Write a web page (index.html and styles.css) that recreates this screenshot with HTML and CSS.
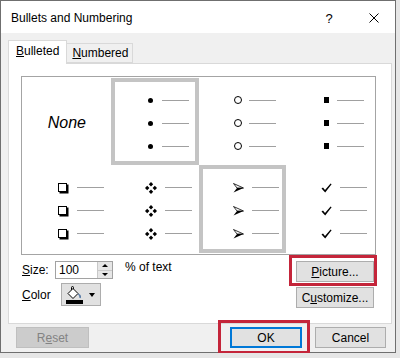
FILE: index.html
```html
<!DOCTYPE html>
<html lang="en">
<head>
    <meta charset="UTF-8">
    <meta name="viewport" content="width=device-width, initial-scale=1.0">
    <title>Bullets and Numbering</title>
    <link rel="stylesheet" href="styles.css">
</head>
<body>
    <div class="window">
        <header class="titlebar">
            <span class="title">Bullets and Numbering</span>
            <span class="help">?</span>
            <svg class="close" width="10" height="10" viewBox="0 0 10 10">
                <path d="M0.5 0.5 L9.5 9.5 M9.5 0.5 L0.5 9.5" stroke="#000" stroke-width="1" fill="none"/>
            </svg>
        </header>

        <main class="content">
            <div class="tabs">
                <div class="tab active"><u>B</u>ulleted</div>
                <div class="tab"><u>N</u>umbered</div>
            </div>

            <section class="panel">
                <div class="gallery">
                    <!-- Row 1 -->
                    <div class="cell none"><span>None</span></div>
                    <div class="cell selected">
                        <div class="item"><span class="glyph"><i class="dot"></i></span><span class="line"></span></div>
                        <div class="item"><span class="glyph"><i class="dot"></i></span><span class="line"></span></div>
                        <div class="item"><span class="glyph"><i class="dot"></i></span><span class="line"></span></div>
                    </div>
                    <div class="cell">
                        <div class="item"><span class="glyph"><i class="ring"></i></span><span class="line"></span></div>
                        <div class="item"><span class="glyph"><i class="ring"></i></span><span class="line"></span></div>
                        <div class="item"><span class="glyph"><i class="ring"></i></span><span class="line"></span></div>
                    </div>
                    <div class="cell">
                        <div class="item"><span class="glyph"><i class="square"></i></span><span class="line"></span></div>
                        <div class="item"><span class="glyph"><i class="square"></i></span><span class="line"></span></div>
                        <div class="item"><span class="glyph"><i class="square"></i></span><span class="line"></span></div>
                    </div>

                    <!-- Row 2 -->
                    <div class="cell wide">
                        <div class="item"><span class="glyph"><i class="box"></i></span><span class="line"></span></div>
                        <div class="item"><span class="glyph"><i class="box"></i></span><span class="line"></span></div>
                        <div class="item"><span class="glyph"><i class="box"></i></span><span class="line"></span></div>
                    </div>
                    <div class="cell wide">
                        <div class="item"><span class="glyph"><svg width="12" height="12" viewBox="0 0 12 12"><path d="M6 0 L8.2 2.2 L6 4.4 L3.8 2.2Z M2.2 3.8 L4.4 6 L2.2 8.2 L0 6Z M9.8 3.8 L12 6 L9.8 8.2 L7.6 6Z M6 7.6 L8.2 9.8 L6 12 L3.8 9.8Z" fill="#000"/></svg></span><span class="line"></span></div>
                        <div class="item"><span class="glyph"><svg width="12" height="12" viewBox="0 0 12 12"><path d="M6 0 L8.2 2.2 L6 4.4 L3.8 2.2Z M2.2 3.8 L4.4 6 L2.2 8.2 L0 6Z M9.8 3.8 L12 6 L9.8 8.2 L7.6 6Z M6 7.6 L8.2 9.8 L6 12 L3.8 9.8Z" fill="#000"/></svg></span><span class="line"></span></div>
                        <div class="item"><span class="glyph"><svg width="12" height="12" viewBox="0 0 12 12"><path d="M6 0 L8.2 2.2 L6 4.4 L3.8 2.2Z M2.2 3.8 L4.4 6 L2.2 8.2 L0 6Z M9.8 3.8 L12 6 L9.8 8.2 L7.6 6Z M6 7.6 L8.2 9.8 L6 12 L3.8 9.8Z" fill="#000"/></svg></span><span class="line"></span></div>
                    </div>
                    <div class="cell wide selected">
                        <div class="item"><span class="glyph"><svg width="11" height="10" viewBox="0 0 11 10"><path d="M0.5 0.5 L10.5 5 L4 5 Z" fill="#fff" stroke="#000" stroke-width="0.8"/><path d="M4 5 L10.5 5 L0.5 9.5 Z" fill="#000"/></svg></span><span class="line"></span></div>
                        <div class="item"><span class="glyph"><svg width="11" height="10" viewBox="0 0 11 10"><path d="M0.5 0.5 L10.5 5 L4 5 Z" fill="#fff" stroke="#000" stroke-width="0.8"/><path d="M4 5 L10.5 5 L0.5 9.5 Z" fill="#000"/></svg></span><span class="line"></span></div>
                        <div class="item"><span class="glyph"><svg width="11" height="10" viewBox="0 0 11 10"><path d="M0.5 0.5 L10.5 5 L4 5 Z" fill="#fff" stroke="#000" stroke-width="0.8"/><path d="M4 5 L10.5 5 L0.5 9.5 Z" fill="#000"/></svg></span><span class="line"></span></div>
                    </div>
                    <div class="cell wide">
                        <div class="item"><span class="glyph"><svg width="11" height="10" viewBox="0 0 11 10"><path d="M0.5 5.6 L2 4.6 L4 7 L9.6 0.4 L10.6 1.2 L4.2 9.6 Z" fill="#000"/></svg></span><span class="line"></span></div>
                        <div class="item"><span class="glyph"><svg width="11" height="10" viewBox="0 0 11 10"><path d="M0.5 5.6 L2 4.6 L4 7 L9.6 0.4 L10.6 1.2 L4.2 9.6 Z" fill="#000"/></svg></span><span class="line"></span></div>
                        <div class="item"><span class="glyph"><svg width="11" height="10" viewBox="0 0 11 10"><path d="M0.5 5.6 L2 4.6 L4 7 L9.6 0.4 L10.6 1.2 L4.2 9.6 Z" fill="#000"/></svg></span><span class="line"></span></div>
                    </div>
                </div>

                <div class="controls">
                    <div class="settings">
                        <div class="size-row">
                            <label class="label size-label"><u>S</u>ize:</label>
                            <div class="spin">
                                <span class="spin-value">100</span>
                                <span class="spin-btns">
                                    <span class="spin-up"><i></i></span>
                                    <span class="spin-down"><i></i></span>
                                </span>
                            </div>
                            <span class="pct">% of text</span>
                        </div>
                        <div class="color-row">
                            <label class="label color-label"><u>C</u>olor</label>
                            <button class="color-btn">
                                <svg width="17" height="18" viewBox="0 0 17 18">
                                    <path d="M5.5 4.5 V1.6 Q5.5 0.5 6.5 0.5 Q7.5 0.5 7.5 1.6 V5" stroke="#000" stroke-width="1" fill="none"/>
                                    <path d="M2 7.5 L7 2.5 L12 7.5 L7 12.5 Z" fill="#fff" stroke="#000" stroke-width="1"/>
                                    <path d="M12 7.5 Q15.5 8.5 15 11.5 Q14.4 12.8 13.4 11.8 Q13.4 9.6 12 8.5 Z" fill="#5a7ca6"/>
                                    <rect x="0" y="14" width="17" height="4" fill="#000"/>
                                </svg>
                                <i class="caret"></i>
                            </button>
                        </div>
                    </div>
                    <div class="side-buttons">
                        <div class="marked mark-picture">
                            <button class="btn side-btn"><u>P</u>icture...</button>
                        </div>
                        <button class="btn side-btn customize">C<u>u</u>stomize...</button>
                    </div>
                </div>
            </section>

            <div class="footer">
                <button class="btn reset" disabled>R<u>e</u>set</button>
                <div class="marked mark-ok">
                    <button class="btn ok">OK</button>
                </div>
                <button class="btn cancel">Cancel</button>
            </div>
        </main>
    </div>
</body>
</html>
```

FILE: styles.css
```css
/* Reset some default styles */
* {
    box-sizing: border-box;
}

body {
    margin: 0;
    background-color: #e6e6e6;
    font-family: "Liberation Sans", Arial, sans-serif;
    font-size: 12px;
    color: #000;
}

button {
    font-family: inherit;
    font-size: 12px;
    color: #000;
    padding: 0;
}

.window {
    width: 396px;
    height: 353px;
    border: 1px solid #6f6f6f;
    background-color: #f0f0f0;
    display: flex;
    flex-direction: column;
}

/* Title bar */
.titlebar {
    height: 32px;
    background-color: #fff;
    display: flex;
    align-items: center;
    padding: 2px 0 0 10px;
}

.title {
    flex: 1;
}

.help {
    width: 10px;
    text-align: center;
    margin-right: 35px;
    font-size: 13px;
}

.close {
    margin-right: 16px;
}

/* Tabs */
.content {
    flex: 1;
    display: flex;
    flex-direction: column;
    padding: 7px 3px 0 7px;
}

.tabs {
    display: flex;
    align-items: flex-end;
}

.tab {
    line-height: 15px;
    border: 1px solid #d9d9d9;
    background-color: #f0f0f0;
    padding: 2px 4px 1px 5px;
}

.tab.active {
    background-color: #fff;
    border-bottom: none;
    padding: 3px 7px 5px 7px;
    margin-bottom: -1px;
    position: relative;
    z-index: 1;
}

.tab.active + .tab {
    border-left: none;
}

.panel {
    background-color: #fff;
    border: 1px solid #d9d9d9;
    padding: 12px 14px 15px 12px;
}

/* Bullet gallery */
.gallery {
    width: 355px;
    height: 179px;
    border: 1px solid #a4a4a4;
    padding: 1px;
    display: grid;
    grid-template-columns: repeat(4, 1fr);
    grid-template-rows: 87px 88px;
}

.cell {
    border: 4px solid transparent;
    display: flex;
    flex-direction: column;
    justify-content: center;
    padding: 3px 6px 0 0;
}

.cell.selected {
    border-color: #c4c4c4;
}

.cell.none {
    align-items: center;
    padding: 2px 0 0 0;
    font-size: 16px;
    font-style: italic;
}

.item {
    height: 23px;
    display: flex;
    align-items: center;
    justify-content: flex-end;
}

.glyph {
    width: 14px;
    display: flex;
    justify-content: center;
    align-items: center;
}

.line {
    width: 27px;
    height: 1px;
    background-color: #a0a0a0;
    margin-left: 4px;
}

.cell.wide {
    padding-right: 3px;
}

.cell.wide .line {
    margin-left: 7px;
}

.dot {
    width: 5px;
    height: 5px;
    border-radius: 50%;
    background-color: #000;
}

.ring {
    width: 8px;
    height: 8px;
    border-radius: 50%;
    border: 1.2px solid #000;
}

.square {
    width: 5px;
    height: 6px;
    background-color: #000;
}

.box {
    width: 9px;
    height: 9px;
    border: 1px solid #000;
    box-shadow: 1.5px 1.5px 0 #000;
    margin: 0 1px 1px 0;
}

/* Size and colour controls */
.controls {
    width: 355px;
    margin-top: 6px;
    display: flex;
    justify-content: space-between;
}

.settings {
    padding-left: 1px;
}

.size-row {
    display: flex;
    align-items: center;
    height: 18px;
}

.label {
    display: inline-block;
}

.size-label {
    width: 33px;
}

.color-label {
    width: 39px;
}

.spin {
    display: flex;
    height: 18px;
    border: 1px solid #a2a2a2;
    background-color: #fff;
}

.spin-value {
    width: 41px;
    padding: 1px 0 0 3px;
    line-height: 15px;
}

.spin-btns {
    width: 15px;
    display: flex;
    flex-direction: column;
    border-left: 1px solid #c8c8c8;
}

.spin-up,
.spin-down {
    flex: 1;
    background-color: #e6e6e6;
    display: flex;
    align-items: center;
    justify-content: center;
}

.spin-up {
    border-bottom: 1px solid #c8c8c8;
}

.spin-up i {
    border-left: 3px solid transparent;
    border-right: 3px solid transparent;
    border-bottom: 3px solid #000;
}

.spin-down i {
    border-left: 3px solid transparent;
    border-right: 3px solid transparent;
    border-top: 3px solid #000;
}

.pct {
    margin-left: 12px;
    align-self: flex-start;
    margin-top: -1px;
}

.color-row {
    display: flex;
    align-items: center;
    margin-top: 4px;
}

.color-btn {
    width: 40px;
    height: 23px;
    background-color: #e1e1e1;
    border: 1px solid #adadad;
    display: flex;
    align-items: center;
    padding: 0 0 0 4px;
}

.caret {
    margin-left: 6px;
    border-left: 3.5px solid transparent;
    border-right: 3.5px solid transparent;
    border-top: 4px solid #000;
}

/* Buttons */
.btn {
    background-color: #e1e1e1;
    border: 1px solid #adadad;
    height: 21px;
    text-align: center;
}

.side-buttons {
    display: flex;
    flex-direction: column;
    margin-right: 2px;
}

.side-btn {
    width: 78px;
    display: block;
}

.customize {
    margin-top: 5px;
}

.footer {
    display: flex;
    padding: 3px 6px 0 8px;
}

.reset {
    width: 73px;
    background-color: #cccccc;
    border-color: #bfbfbf;
    color: #838383;
    margin-right: auto;
}

.ok {
    width: 72px;
    border: 2px solid #0078d7;
    display: block;
}

.cancel {
    width: 71px;
    margin-left: 13px;
}

/* Red annotation frames drawn over the buttons */
.marked {
    position: relative;
}

.marked::after {
    content: "";
    position: absolute;
    border: 3px solid #c4253a;
}

.mark-picture::after {
    top: -6px;
    bottom: -4px;
    left: -7px;
    right: -3px;
}

.mark-ok::after {
    top: -7px;
    bottom: -6px;
    left: -12px;
    right: -8px;
}
```
